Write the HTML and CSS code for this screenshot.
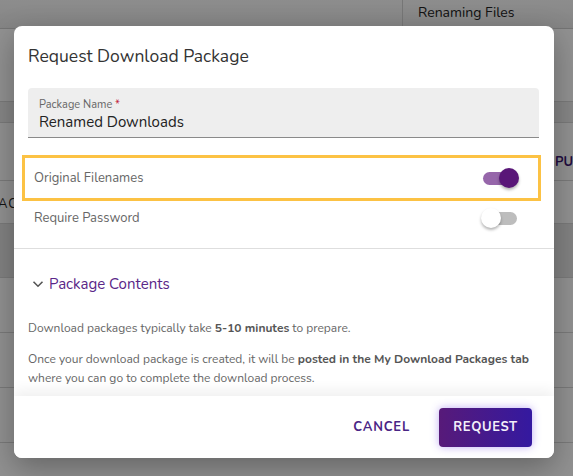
FILE: index.html
```html
<!DOCTYPE html>
<html lang="en">
<head>
  <meta charset="UTF-8" />
  <title>Request Download Package</title>
  <link rel="stylesheet" href="styles.css">
</head>
<body>
  <!-- Page behind the dialog -->
  <div class="page">
    <div class="page-header">
      <div class="header-cell"></div>
      <div class="header-cell tab">Renaming Files</div>
    </div>
    <div class="page-row tall"></div>
    <div class="page-row band"></div>
    <div class="page-row mid"><span class="right-text">PUL</span></div>
    <div class="page-row short"><span class="left-text">AC</span></div>
    <div class="page-row band2"></div>
    <div class="page-row"></div>
    <div class="page-row"></div>
    <div class="page-row"></div>
  </div>

  <div class="overlay">
    <div class="dialog">
      <h2 class="dialog-title">Request Download Package</h2>

      <div class="dialog-body">
        <div class="text-field">
          <label class="field-label">Package Name <span class="req">*</span></label>
          <div class="field-value">Renamed Downloads</div>
        </div>

        <div class="switch-row highlight">
          <span>Original Filenames</span>
          <span class="switch on"><span class="track"></span><span class="thumb"></span></span>
        </div>
        <div class="switch-row">
          <span>Require Password</span>
          <span class="switch"><span class="track"></span><span class="thumb"></span></span>
        </div>
      </div>

      <div class="divider"></div>

      <div class="dialog-body">
        <div class="accordion">
          <svg width="12" height="12" viewBox="0 0 12 12"><path d="M1.5 3.8 L6 8.2 L10.5 3.8" fill="none" stroke="#555" stroke-width="1.6"/></svg>
          <span>Package Contents</span>
        </div>

        <p class="note">Download packages typically take <b>5-10 minutes</b> to prepare.</p>
        <p class="note">Once your download package is created, it will be <b>posted in the My Download Packages tab</b> where you can go to complete the download process.</p>
      </div>

      <div class="dialog-actions">
        <button class="btn-text">CANCEL</button>
        <button class="btn-primary">REQUEST</button>
      </div>
    </div>
  </div>
</body>
</html>
```

FILE: styles.css
```css
* {
  margin: 0;
  padding: 0;
  box-sizing: border-box;
  font-family: 'Nunito', 'Lato', 'Open Sans', sans-serif;
}

body {
  width: 573px;
  height: 476px;
  overflow: hidden;
  position: relative;
  background: #fff;
}

/* Background page */
.page-header {
  display: flex;
  height: 29px;
  border-bottom: 1px solid #ccc;
  background: linear-gradient(#f8f8f8, #eaeaea);
}

.header-cell {
  flex: 1;
}

.header-cell.tab {
  flex: 0 0 171px;
  border-left: 1px solid #cfcfcf;
  padding: 3px 0 0 15px;
  font-size: 14px;
  color: #222;
}

.page-row {
  height: 55px;
  border-bottom: 1px solid #d6d6d6;
  position: relative;
}

.page-row.tall { height: 73px; }
.page-row.band { height: 21px; background: #ececec; }
.page-row.mid { height: 58px; }
.page-row.short { height: 43px; }
.page-row.band2 { height: 54px; background: #e4e4e4; }

.right-text {
  position: absolute;
  left: 555px;
  top: 30px;
  font-size: 13px;
  font-weight: bold;
  color: #3a1670;
}

.left-text {
  position: absolute;
  left: -2px;
  top: 14px;
  font-size: 13px;
  color: #222;
  letter-spacing: 1px;
}

/* Overlay */
.overlay {
  position: absolute;
  inset: 0;
  background: rgba(0, 0, 0, 0.43);
  padding: 26px 0 0 14px;
}

.dialog {
  width: 540px;
  height: 432px;
  background: #fff;
  border-radius: 8px;
  box-shadow: 0 10px 30px rgba(0, 0, 0, 0.3);
  display: flex;
  flex-direction: column;
  overflow: hidden;
}

.dialog-title {
  font-size: 17.5px;
  font-weight: normal;
  color: #333;
  padding: 18px 14px 0;
  height: 62px;
}

.dialog-body {
  padding: 0 15px 0 14px;
}

/* Text field */
.text-field {
  background: #eeeeee;
  border-bottom: 1px solid #8a8a8a;
  border-radius: 4px 4px 0 0;
  height: 50px;
  padding: 10px 11px 0;
}

.field-label {
  display: block;
  font-size: 11px;
  color: #666;
  line-height: 14px;
}

.req {
  color: #c0193c;
}

.field-value {
  font-size: 15px;
  color: #222;
  line-height: 21px;
}

/* Switch rows */
.switch-row {
  display: flex;
  align-items: center;
  justify-content: space-between;
  height: 40px;
  padding: 0 21px 0 9px;
  font-size: 13px;
  color: #666;
  margin-left: -3px;
  margin-right: 1px;
}

.switch-row.highlight {
  margin-top: 20px;
  outline: 3px solid #fcc244;
}

.switch {
  position: relative;
  width: 34px;
  height: 20px;
  display: flex;
  align-items: center;
}

.track {
  width: 34px;
  height: 13px;
  border-radius: 7px;
  background: #bdbdbd;
}

.thumb {
  position: absolute;
  left: -2px;
  top: 0;
  width: 20px;
  height: 20px;
  border-radius: 50%;
  background: #fff;
  box-shadow: 0 2px 3px rgba(0, 0, 0, 0.3);
}

.switch.on .track {
  background: #9666aa;
}

.switch.on .thumb {
  left: 16px;
  background: #591678;
}

.divider {
  height: 1px;
  background: #dedede;
  margin-top: 10px;
}

/* Accordion */
.accordion {
  display: flex;
  align-items: center;
  gap: 5px;
  padding: 12px 0 0 4px;
  height: 58px;
  font-size: 15px;
  color: #5a2788;
}

.note {
  font-size: 12px;
  line-height: 19px;
  color: #666;
  margin-top: 12px;
}

.note b {
  color: #555;
}

.note + .note {
  margin-top: 12px;
}

/* Footer */
.dialog-actions {
  margin-top: auto;
  height: 62px;
  display: flex;
  align-items: center;
  justify-content: flex-end;
  gap: 24px;
  padding-right: 22px;
  background: #fff;
  box-shadow: 0 -6px 12px rgba(0, 0, 0, 0.06);
  position: relative;
}

.btn-text {
  background: none;
  border: none;
  font-size: 13px;
  font-weight: bold;
  letter-spacing: 0.8px;
  color: #4a2585;
  padding: 0 5px;
}

.btn-primary {
  width: 93px;
  height: 39px;
  border: none;
  border-radius: 4px;
  background: linear-gradient(90deg, #571a79, #3419a0);
  color: #f4f0fa;
  font-size: 13px;
  font-weight: bold;
  letter-spacing: 0.6px;
  box-shadow: 0 0 8px rgba(110, 70, 230, 0.45);
}
```
